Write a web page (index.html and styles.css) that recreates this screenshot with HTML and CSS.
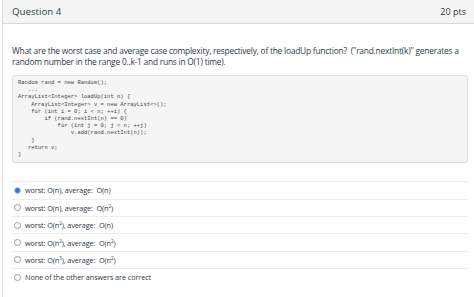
FILE: index.html
```html
<!DOCTYPE html>
<html lang="en">
<head>
    <meta charset="UTF-8">
    <title>Question 4</title>
    <link rel="stylesheet" href="styles.css">
</head>
<body>
    <div class="question">
        <div class="question-header">
            <span class="question-title">Question 4</span>
            <span class="question-points">20 pts</span>
        </div>

        <div class="question-body">
            <p class="question-text">What are the worst case and average case complexity, respectively, of the loadUp function?&nbsp; ("rand.nextInt(k)" generates a&nbsp; random number in the range 0..k-1 and runs in O(1) time).</p>

<pre class="code-block">Random rand = new Random();
   ...
ArrayList&lt;Integer&gt; loadUp(int n) {
    ArrayList&lt;Integer&gt; v = new ArrayList&lt;&gt;();
    for (int i = 0; i &lt; n; ++i) {
        if (rand.nextInt(n) == 0)
            for (int j = 0; j &lt; n; ++j)
                v.add(rand.nextInt(n));
    }
   return v;
}</pre>

            <div class="answers">
                <label class="answer">
                    <span class="radio checked"></span>
                    <span>worst: O(n), average:&nbsp; O(n)</span>
                </label>
                <label class="answer">
                    <span class="radio"></span>
                    <span>worst: O(n), average:&nbsp; O(n<sup>2</sup>)</span>
                </label>
                <label class="answer">
                    <span class="radio"></span>
                    <span>worst: O(n<sup>2</sup>), average:&nbsp; O(n)</span>
                </label>
                <label class="answer">
                    <span class="radio"></span>
                    <span>worst: O(n<sup>2</sup>), average:&nbsp; O(n<sup>2</sup>)</span>
                </label>
                <label class="answer">
                    <span class="radio"></span>
                    <span>worst: O(n<sup>3</sup>), average:&nbsp; O(n<sup>2</sup>)</span>
                </label>
                <label class="answer">
                    <span class="radio"></span>
                    <span>None of the other answers are correct</span>
                </label>
            </div>
        </div>
    </div>
</body>
</html>
```

FILE: styles.css
```css
* {
    margin: 0;
    padding: 0;
    box-sizing: border-box;
}

html, body {
    height: 100%;
}

body {
    font-family: 'Open Sans', 'Liberation Sans', sans-serif;
    color: #2d3b45;
    background: white;
    overflow: hidden;
}

.question {
    margin-left: 2px;
    min-height: 100%;
    border-left: 1px solid #dcdcdc;
}

.question-header {
    height: 24px;
    background: #f5f5f5;
    border-bottom: 1px solid #d8d8d8;
    display: flex;
    align-items: center;
    justify-content: space-between;
    padding: 0 8px 0 9px;
}

.question-title {
    font-size: 9.7px;
}

.question-points {
    font-size: 9px;
}

.question-body {
    padding: 21px 6px 0 9px;
}

.question-text {
    font-size: 8.4px;
    letter-spacing: -0.22px;
    line-height: 11px;
}

.code-block {
    margin-top: 8px;
    background: #f5f5f5;
    border: 1px solid #dddddd;
    border-radius: 3px;
    padding: 3px 5px 4px;
    font-family: 'Liberation Mono', monospace;
    font-size: 5.5px;
    line-height: 7.2px;
    color: #444;
}

.answers {
    margin-top: 18px;
}

.answer {
    display: flex;
    align-items: center;
    gap: 4px;
    height: 17.4px;
    padding-left: 2px;
    border-top: 1px solid #ececec;
    font-size: 7.3px;
    letter-spacing: -0.1px;
}

.answer sup {
    font-size: 4.5px;
    vertical-align: 3px;
}

.radio {
    width: 7px;
    height: 7px;
    border-radius: 50%;
    border: 1px solid #9a9a9a;
    background: white;
    flex-shrink: 0;
}

.radio.checked {
    border: 1.5px solid #b9d3f4;
    background: #2b78e4;
}
```
